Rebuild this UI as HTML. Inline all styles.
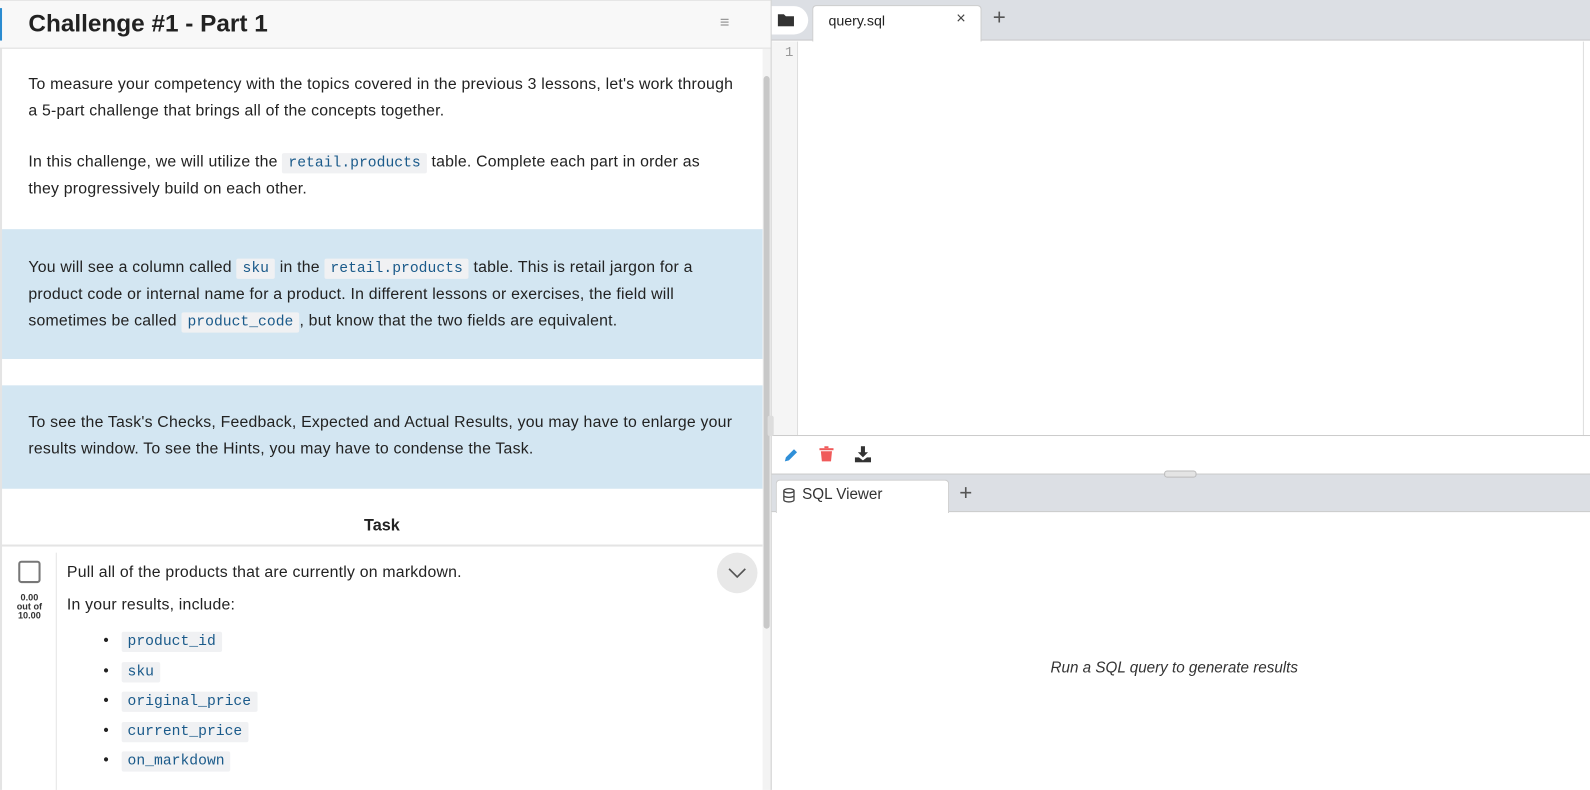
<!DOCTYPE html>
<html><head><style>
*{box-sizing:border-box;margin:0;padding:0}
body{width:1590px;height:779px;overflow:hidden;background:#fff;font-family:"Liberation Sans",sans-serif;color:#222;position:relative}
#w{position:absolute;left:0;top:0;width:1568px;height:768px;transform:scale(1.01403);transform-origin:0 0}
.abs{position:absolute}
code{font-family:"Liberation Mono",monospace;font-size:14.5px;color:#1a5a8a;background:#f0f1f3;padding:2px 6px;border-radius:2px;letter-spacing:0}
p{font-size:15.6px;line-height:26px;white-space:nowrap;letter-spacing:0.22px}
</style></head><body><div id="w">
<div class="abs" style="left:0;top:0;width:760px;height:48px;background:#f8f8f8;border-bottom:1px solid #ddd;border-top:1px solid #e6e6e6"></div>
<div class="abs" style="left:0;top:8px;width:2px;height:32px;background:#2a8bd0"></div>
<div class="abs" style="left:28px;top:10px;font-size:24px;font-weight:bold;color:#222">Challenge #1 - Part 1</div>
<div class="abs" style="left:710px;top:14px;color:#999;font-size:16px">≡</div>
<div class="abs" style="left:752px;top:48px;width:8px;height:731px;background:#f3f3f3"></div>
<div class="abs" style="left:753px;top:75px;width:6px;height:545px;background:#c8c8c8;border-radius:3px"></div>
<div class="abs" style="left:0;top:48px;width:2px;height:731px;background:#e4e4e4"></div>
<p class="abs" style="left:28px;top:71px">To measure your competency with the topics covered in the previous 3 lessons, let's work through<br>a 5-part challenge that brings all of the concepts together.</p>
<p class="abs" style="left:28px;top:147px">In this challenge, we will utilize the <code>retail.products</code> table. Complete each part in order as<br>they progressively build on each other.</p>
<div class="abs" style="left:2px;top:226px;width:750px;height:128px;background:#d3e6f2"></div>
<p class="abs" style="left:28px;top:251px">You will see a column called <code>sku</code> in the <code>retail.products</code> table. This is retail jargon for a<br>product code or internal name for a product. In different lessons or exercises, the field will<br>sometimes be called <code>product_code</code>, but know that the two fields are equivalent.</p>
<div class="abs" style="left:2px;top:380px;width:750px;height:102px;background:#d3e6f2"></div>
<p class="abs" style="left:28px;top:404px">To see the Task's Checks, Feedback, Expected and Actual Results, you may have to enlarge your<br>results window. To see the Hints, you may have to condense the Task.</p>
<div class="abs" style="left:359px;top:510px;font-size:16px;font-weight:bold">Task</div>
<div class="abs" style="left:2px;top:537px;width:750px;height:2px;background:#e4e4e4"></div>
<div class="abs" style="left:55px;top:545px;width:1px;height:234px;background:#e4e4e4"></div>
<div class="abs" style="left:18px;top:553px;width:22px;height:22px;border:2px solid #777;border-radius:3px"></div>
<div class="abs" style="left:12px;top:585px;width:34px;font-size:9px;line-height:9px;text-align:center;font-weight:bold;color:#333">0.00<br>out of<br>10.00</div>
<p class="abs" style="left:66px;top:552px">Pull all of the products that are currently on markdown.</p>
<p class="abs" style="left:66px;top:584px">In your results, include:</p>
<div class="abs" style="left:707px;top:545px;width:40px;height:40px;border-radius:50%;background:#e8e8e8"></div>
<svg class="abs" style="left:717px;top:558px" width="20" height="14"><path d="M2 3 L10 11 L18 3" stroke="#555" stroke-width="1.6" fill="none"/></svg>
<div class="abs" style="left:102px;top:618px;font-size:15px;line-height:28.6px">
<div>•&nbsp;&nbsp;&nbsp;<code>product_id</code></div>
<div>•&nbsp;&nbsp;&nbsp;<code>sku</code></div>
<div>•&nbsp;&nbsp;&nbsp;<code>original_price</code></div>
<div>•&nbsp;&nbsp;&nbsp;<code>current_price</code></div>
<div>•&nbsp;&nbsp;&nbsp;<code>on_markdown</code></div>
</div>
<div class="abs" style="left:760px;top:0;width:1px;height:779px;background:#ccc"></div>
<div class="abs" style="left:761px;top:0;width:829px;height:40px;background:#dcdfe4;border-bottom:1px solid #c8c8c8"></div>
<div class="abs" style="left:761px;top:6px;width:36px;height:28px;background:#fff;border-radius:0 14px 14px 0"></div>
<svg class="abs" style="left:767px;top:13px" width="16" height="13"><path d="M0 1h6l2 2h8v10H0z" fill="#333"/></svg>
<div class="abs" style="left:801px;top:5px;width:167px;height:36px;background:#fff;border:1px solid #ccc;border-bottom:none;border-radius:4px 4px 0 0"></div>
<div class="abs" style="left:817px;top:12px;font-size:14px">query.sql</div>
<div class="abs" style="left:943px;top:10px;font-size:16px;color:#444">×</div>
<div class="abs" style="left:979px;top:4px;font-size:22px;color:#555">+</div>
<div class="abs" style="left:761px;top:41px;width:26px;height:389px;background:#f5f5f5;border-right:1px solid #ddd"></div>
<div class="abs" style="left:774px;top:44px;font-family:'Liberation Mono',monospace;font-size:14px;color:#999">1</div>
<div class="abs" style="left:1561px;top:41px;width:1px;height:389px;background:#ddd"></div>
<div class="abs" style="left:761px;top:429px;width:829px;height:1px;background:#ccc"></div>
<div class="abs" style="left:757px;top:410px;width:6px;height:20px;background:#ddd;border-radius:2px"></div>
<svg class="abs" style="left:772px;top:441px" width="16" height="16"><path d="M2 14 L3 10 L11 2 L14 5 L6 13 Z" fill="#2f8fd8"/></svg>
<svg class="abs" style="left:808px;top:440px" width="14" height="16"><rect x="0" y="2" width="14" height="2" fill="#f05a5a"/><rect x="5" y="0" width="4" height="2" fill="#f05a5a"/><path d="M1.5 5h11l-1 10h-9z" fill="#f05a5a"/></svg>
<svg class="abs" style="left:843px;top:440px" width="16" height="16"><path d="M6 0h4v6h3l-5 5-5-5h3z M0 11h4l4 3 4-3h4v5H0z" fill="#333"/></svg>
<div class="abs" style="left:761px;top:467px;width:829px;height:38px;background:#dcdfe4;border-top:1px solid #ccc;border-bottom:1px solid #ccc"></div>
<div class="abs" style="left:1148px;top:464px;width:32px;height:7px;background:#e4e4e4;border:1px solid #bbb;border-radius:3px"></div>
<div class="abs" style="left:765px;top:473px;width:171px;height:33px;background:#fff;border:1px solid #ccc;border-bottom:none;border-radius:4px 4px 0 0"></div>
<svg class="abs" style="left:772px;top:481px" width="12" height="15"><g fill="none" stroke="#444" stroke-width="1.3"><ellipse cx="6" cy="3" rx="5" ry="2"/><path d="M1 3v9c0 1 2 2 5 2s5-1 5-2V3M1 7.5c0 1 2 2 5 2s5-1 5-2"/></g></svg>
<div class="abs" style="left:791px;top:479px;font-size:15px;color:#333">SQL Viewer</div>
<div class="abs" style="left:946px;top:473px;font-size:22px;color:#555">+</div>
<div class="abs" style="left:1036px;top:650px;font-size:15px;font-style:italic;color:#333">Run a SQL query to generate results</div>
</div></body></html>
